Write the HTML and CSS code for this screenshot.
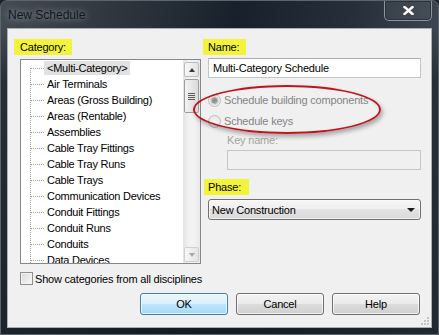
FILE: index.html
```html
<!DOCTYPE html>
<html>
<head>
<meta charset="utf-8">
<link rel="stylesheet" href="styles.css">
</head>
<body>
<div class="window">
  <div class="titlebar">
    <span class="title">New Schedule</span>
    <div class="close">
      <svg width="11" height="9" viewBox="0 0 11 9"><path d="M1.5 1 L9.5 8 M9.5 1 L1.5 8" stroke="#fff" stroke-width="2.4" stroke-linecap="square"/></svg>
    </div>
  </div>
  <div class="client">
    <div class="main">
      <div class="left">
        <div class="hl">Category:</div>
        <div class="listbox">
          <ul class="tree">
            <li class="sel"><span>&lt;Multi-Category&gt;</span></li>
            <li><span>Air Terminals</span></li>
            <li><span>Areas (Gross Building)</span></li>
            <li><span>Areas (Rentable)</span></li>
            <li><span>Assemblies</span></li>
            <li><span>Cable Tray Fittings</span></li>
            <li><span>Cable Tray Runs</span></li>
            <li><span>Cable Trays</span></li>
            <li><span>Communication Devices</span></li>
            <li><span>Conduit Fittings</span></li>
            <li><span>Conduit Runs</span></li>
            <li><span>Conduits</span></li>
            <li><span>Data Devices</span></li>
          </ul>
          <div class="vscroll">
            <div class="sb-btn"><i class="tri-up"></i></div>
            <div class="sb-thumb"><i></i></div>
            <div class="sb-track"></div>
            <div class="sb-btn off"><i class="tri-down"></i></div>
          </div>
        </div>
        <div class="check"><span class="box"></span><span>Show categories from all disciplines</span></div>
      </div>
      <div class="right">
        <div class="hl name">Name:</div>
        <div class="input">Multi-Category Schedule</div>
        <div class="radios">
          <div class="radio"><span class="dot on"></span><span>Schedule building components</span></div>
          <div class="radio"><span class="dot"></span><span>Schedule keys</span></div>
          <div class="ring"></div>
        </div>
        <div class="sublabel">Key name:</div>
        <div class="input disabled"></div>
        <div class="hl phase">Phase:</div>
        <div class="combo"><span>New Construction</span><i class="tri-down dark"></i></div>
      </div>
    </div>
    <div class="buttons">
      <div class="btn default">OK</div>
      <div class="btn">Cancel</div>
      <div class="btn">Help</div>
    </div>
    <svg class="grip" width="10" height="10" viewBox="0 0 10 10">
      <g fill="#c4c4c4">
        <rect x="7" y="1" width="2" height="2"/>
        <rect x="4" y="4" width="2" height="2"/><rect x="7" y="4" width="2" height="2"/>
        <rect x="1" y="7" width="2" height="2"/><rect x="4" y="7" width="2" height="2"/><rect x="7" y="7" width="2" height="2"/>
      </g>
    </svg>
  </div>
</div>
</body>
</html>
```

FILE: styles.css
```css
* { box-sizing: border-box; }
html, body { margin: 0; padding: 0; }
body {
  width: 439px;
  height: 335px;
  overflow: hidden;
  background: #1d232a;
  font-family: "Liberation Sans", Arial, sans-serif;
  font-size: 11px;
  letter-spacing: -0.2px;
  color: #000;
}
.window {
  width: 439px;
  height: 335px;
  border: 1px solid #5c646c;
  border-radius: 7px 7px 0 0;
  padding: 0 6px 6px;
  display: flex;
  flex-direction: column;
  background:
    linear-gradient(to bottom, rgba(0,0,0,0) 0, rgba(0,0,0,0) 28px, rgba(20,26,33,0.55) 80px, rgba(20,26,33,0.75) 100%),
    linear-gradient(100deg, #454b52 0%, #30373f 22%, #18212b 48%, #27303a 72%, #4b545e 100%);
}
.titlebar {
  height: 27px;
  flex: none;
  display: flex;
  align-items: flex-start;
}
.title {
  margin: 7px 0 0 1px;
  font-size: 12px;
  line-height: 15px;
  letter-spacing: 0;
  color: #0c1722;
  text-shadow: 0 0 6px rgba(255,255,255,0.45), 0 0 12px rgba(255,255,255,0.25);
}
.close {
  margin-left: auto;
  width: 48px;
  height: 20px;
  border: 1px solid #8d959e;
  border-top: none;
  border-radius: 0 0 5px 5px;
  box-shadow: inset 0 0 0 1px #2a323b;
  background: rgba(255,255,255,0.05);
  display: flex;
  align-items: center;
  justify-content: center;
}
.client {
  flex: 1;
  position: relative;
  border: 1px solid #a9afb5;
  background: #f0f0f0;
  padding: 10px 10px 0 12px;
  display: flex;
  flex-direction: column;
}
.main {
  display: grid;
  grid-template-columns: 181px 213px;
  column-gap: 7px;
}
.left, .right { display: flex; flex-direction: column; }
.hl {
  align-self: flex-start;
  height: 16px;
  line-height: 16px;
  padding: 0 6px;
  margin-left: -6px;
  background: #f3f33a;
}
.hl.name { margin-left: -5px; padding: 0 7px 0 5px; }
.hl.phase { margin-top: 9px; margin-left: -4px; padding: 0 8px 0 4px; }

.listbox {
  margin-top: 4px;
  height: 205px;
  border: 1px solid #828790;
  background: #fff;
  display: flex;
}
.tree {
  flex: 1;
  margin: 0;
  padding: 0;
  list-style: none;
  overflow: hidden;
  background-image: repeating-linear-gradient(to bottom, #a0a0a0 0, #a0a0a0 1px, transparent 1px, transparent 2px);
  background-repeat: no-repeat;
  background-position: 9px 8px;
  background-size: 1px 100%;
}
.tree li {
  height: 16px;
  display: flex;
  align-items: center;
  white-space: nowrap;
  letter-spacing: -0.25px;
}
.tree li::before {
  content: "";
  flex: none;
  width: 13px;
  margin-left: 10px;
  border-top: 1px dotted #a0a0a0;
}
.tree li span {
  height: 14px;
  line-height: 14px;
  padding: 0 3px 0 3px;
}
.tree li.sel span { background: #e1e1e1; }

.vscroll {
  width: 17px;
  flex: none;
  display: flex;
  flex-direction: column;
  background: linear-gradient(to right, #e3e3e3 0, #f2f2f2 35%, #f2f2f2 70%, #e8e8e8 100%);
}
.sb-btn {
  height: 15px;
  margin: 2px 1px 1px;
  border: 1px solid #bcbcbc;
  border-radius: 2px;
  background: linear-gradient(to right, #f7f7f7, #e4e4e4);
  display: flex;
  align-items: center;
  justify-content: center;
}
.sb-btn.off { margin: 1px 1px 1px; border-color: #d0d0d0; }
.sb-thumb {
  height: 34px;
  margin: 1px 1px 0;
  border: 1px solid #9d9d9d;
  border-radius: 2px;
  background: linear-gradient(to right, #f3f3f3, #dadada);
  display: flex;
  align-items: center;
  justify-content: center;
}
.sb-thumb i {
  width: 7px;
  height: 7px;
  background: repeating-linear-gradient(to bottom, #5c5c5c 0, #5c5c5c 1px, transparent 1px, transparent 2px);
}
.sb-track { flex: 1; }
.tri-up {
  width: 0; height: 0;
  border-left: 3.5px solid transparent;
  border-right: 3.5px solid transparent;
  border-bottom: 4px solid #3a3a3a;
}
.tri-down {
  width: 0; height: 0;
  border-left: 3.5px solid transparent;
  border-right: 3.5px solid transparent;
  border-top: 4px solid #a8a8a8;
}
.tri-down.dark { border-top-color: #1a1a1a; border-left-width: 4px; border-right-width: 4px; }

.check {
  margin-top: 8px;
  height: 13px;
  display: flex;
  align-items: center;
  gap: 2px;
  white-space: nowrap;
}
.box {
  flex: none;
  width: 13px;
  height: 13px;
  border: 1px solid #8e8f8f;
  background: linear-gradient(135deg, #d8d8d8, #fbfbfb);
  box-shadow: inset 0 0 0 1px #f2f2f2;
}

.input {
  margin-top: 3px;
  height: 20px;
  border: 1px solid #c2c5ca;
  border-top-color: #abadb3;
  background: #fff;
  padding: 0 4px;
  line-height: 18px;
  white-space: nowrap;
}
.input.disabled {
  margin: 2px 0 0 19px;
  background: #f0f0f0;
  border-color: #c6c6c6;
}
.radios {
  position: relative;
  margin-top: 14px;
  display: flex;
  flex-direction: column;
  gap: 5px;
}
.radio {
  height: 16px;
  display: flex;
  align-items: center;
  gap: 3px;
  color: #848484;
}
.dot {
  flex: none;
  width: 13px;
  height: 13px;
  border-radius: 50%;
  border: 1px solid #bcbcbc;
  background: radial-gradient(circle, #f5f5f5 0, #e3e3e3 100%);
}
.dot.on {
  background: radial-gradient(circle, #8c8c8c 0, #9a9a9a 2.5px, #cfcfcf 3.5px, #eeeeee 5px);
}
.ring {
  position: absolute;
  left: -15px;
  top: -7px;
  width: 188px;
  height: 49px;
  border: 2px solid #c0151d;
  border-radius: 50%;
  box-shadow: 2px 3px 4px rgba(0,0,0,0.3);
  pointer-events: none;
}
.sublabel {
  margin: 3px 0 0 19px;
  height: 16px;
  line-height: 16px;
  color: #a4a4a4;
}
.combo {
  margin-top: 4px;
  height: 21px;
  border: 1px solid #707070;
  border-radius: 3px;
  background: linear-gradient(to bottom, #f6f6f6 0, #efefef 50%, #e3e3e3 50%, #d9d9d9 100%);
  box-shadow: inset 0 0 0 1px rgba(255,255,255,0.6);
  display: flex;
  align-items: center;
  justify-content: space-between;
  padding: 0 5px 0 3px;
  white-space: nowrap;
}
.buttons {
  margin-top: 8px;
  display: flex;
  justify-content: flex-end;
  gap: 8px;
  padding-right: 1px;
}
.btn {
  width: 88px;
  height: 22px;
  border: 1px solid #707070;
  border-radius: 3px;
  background: linear-gradient(to bottom, #f2f2f2 0, #ebebeb 50%, #dddddd 50%, #cfcfcf 100%);
  box-shadow: inset 0 0 0 1px rgba(255,255,255,0.7);
  display: flex;
  align-items: center;
  justify-content: center;
}
.btn.default {
  border-color: #3c7fb1;
  background: linear-gradient(to bottom, #eaf6fd 0, #d9f0fc 50%, #bee6fd 50%, #a7d9f5 100%);
}
.grip {
  position: absolute;
  right: 1px;
  bottom: 1px;
}
```
